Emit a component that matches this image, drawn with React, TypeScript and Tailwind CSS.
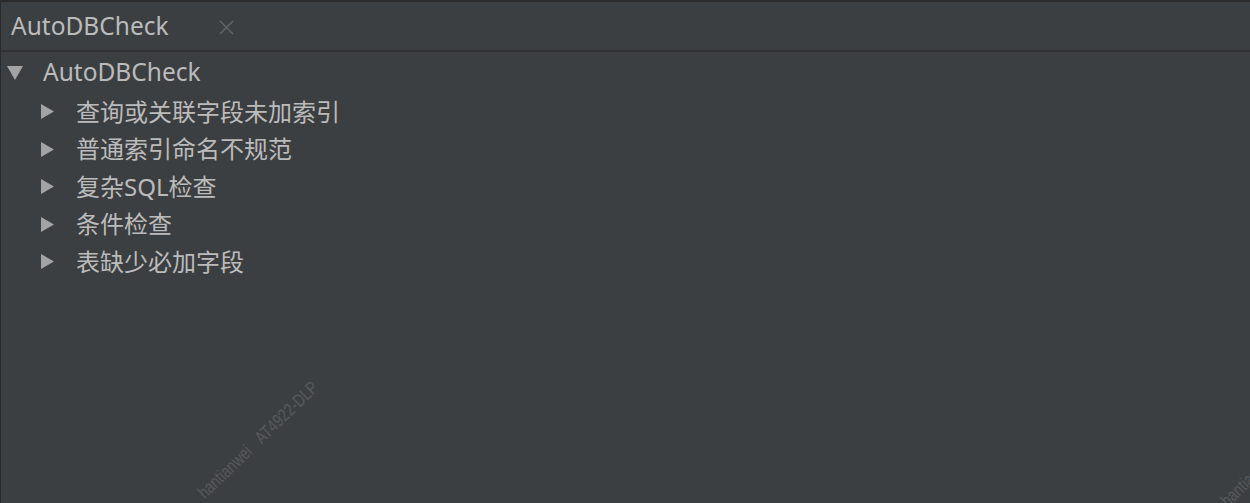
const items = [
  "查询或关联字段未加索引",
  "普通索引命名不规范",
  "复杂SQL检查",
  "条件检查",
  "表缺少必加字段",
];

const font = { fontFamily: '"Microsoft YaHei", "Noto Sans", "Noto Sans CJK SC", sans-serif' };
const markFont = { fontFamily: '"Liberation Sans", sans-serif' };

function Down() {
  return (
    <svg width="16" height="14" viewBox="0 0 16 14">
      <path d="M0 0 H16 L8 14 Z" fill="#a3a3a3" />
    </svg>
  );
}

function Right() {
  return (
    <svg width="13" height="15" viewBox="0 0 13 15">
      <path d="M0 0 L13 7.5 L0 15 Z" fill="#a3a3a3" />
    </svg>
  );
}

function Close() {
  return (
    <svg width="15" height="15" viewBox="0 0 15 15">
      <path d="M1 1 L14 14 M14 1 L1 14" stroke="#5e6366" strokeWidth="1.6" />
    </svg>
  );
}

export default function App() {
  return (
    <div
      className="relative h-[503px] w-[1250px] overflow-hidden border-t-2 border-l border-[#2b2b2b] bg-[#3c3f41] text-[#bbbbbb]"
      style={font}
    >
      <div className="flex h-[50px] items-center border-b-2 border-[#323232]">
        <span className="pl-[10px] text-[24.5px] leading-none">AutoDBCheck</span>
        <span className="ml-[50px] mt-[2px]"><Close /></span>
      </div>
      <div className="flex h-[41px] items-center">
        <span className="ml-[6px]"><Down /></span>
        <span className="ml-[20px] text-[24.5px] leading-none">AutoDBCheck</span>
      </div>
      <div className="flex flex-col">
        {items.map((t) => (
          <div key={t} className="flex h-[37.5px] items-center">
            <span className="ml-[40px]"><Right /></span>
            <span className="ml-[22px] text-[24px] leading-none">{t}</span>
          </div>
        ))}
      </div>
      <div
        className="pointer-events-none absolute left-[257px] top-[438px] -translate-x-1/2 -translate-y-1/2 rotate-[-44deg] scale-x-[0.78] whitespace-nowrap text-[18px] leading-none text-[#56595c]"
        style={markFont}
      >
        hantianwei&nbsp;&nbsp;&nbsp;AT4922-DLP
      </div>
      <div
        className="pointer-events-none absolute left-[1280px] top-[446px] -translate-x-1/2 -translate-y-1/2 rotate-[-44deg] scale-x-[0.78] whitespace-nowrap text-[18px] leading-none text-[#56595c]"
        style={markFont}
      >
        hantianwei&nbsp;&nbsp;&nbsp;AT4922-DLP
      </div>
    </div>
  );
}
